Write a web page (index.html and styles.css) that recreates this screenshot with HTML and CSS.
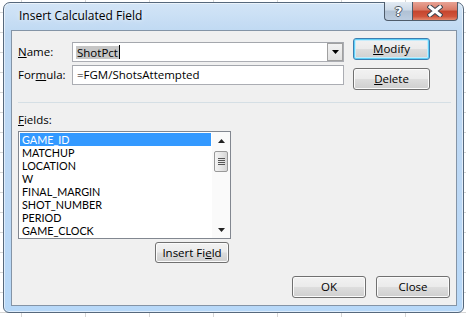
FILE: index.html
```html
<!DOCTYPE html>
<html>
<head>
<meta charset="utf-8">
<link rel="stylesheet" href="styles.css">
</head>
<body>
<div class="win">
  <div class="titlebar">
    <span class="title">Insert Calculated Field</span>
    <div class="caps">
      <span class="cap help">?</span>
      <span class="cap xbtn">
        <svg width="16" height="12" viewBox="0 0 16 12">
          <path d="M3 2 L13 10 M13 2 L3 10" stroke="#3d4650" stroke-width="5" stroke-linecap="square" fill="none"/>
          <path d="M3 2 L13 10 M13 2 L3 10" stroke="#fff" stroke-width="3" stroke-linecap="square" fill="none"/>
        </svg>
      </span>
    </div>
  </div>
  <div class="client">
    <div class="top">
      <div class="fields-col">
        <div class="row r1">
          <span class="lbl"><u>N</u>ame:</span>
          <div class="combo">
            <span class="selected">ShotPct</span><span class="caret"></span>
            <span class="drop"><svg width="7" height="4" viewBox="0 0 7 4"><path d="M0 0 H7 L3.5 4 Z" fill="#000"/></svg></span>
          </div>
        </div>
        <div class="row r2">
          <span class="lbl">For<u>m</u>ula:</span>
          <div class="input">=FGM/ShotsAttempted</div>
        </div>
      </div>
      <div class="btn-col">
        <button class="btn default modify"><u>M</u>odify</button>
        <button class="btn delete"><u>D</u>elete</button>
      </div>
    </div>
    <div class="sep"></div>
    <div class="flabel"><u>F</u>ields:</div>
    <div class="list">
      <ul class="items">
        <li class="sel">GAME_ID</li>
        <li>MATCHUP</li>
        <li>LOCATION</li>
        <li>W</li>
        <li>FINAL_MARGIN</li>
        <li>SHOT_NUMBER</li>
        <li>PERIOD</li>
        <li>GAME_CLOCK</li>
      </ul>
      <div class="sb">
        <div class="sb-arrow"><svg width="7" height="4" viewBox="0 0 7 4"><path d="M3.5 0 L7 4 H0 Z" fill="#222"/></svg></div>
        <div class="sb-thumb"><span></span><span></span><span></span><span></span></div>
        <div class="sb-track"></div>
        <div class="sb-arrow"><svg width="7" height="4" viewBox="0 0 7 4"><path d="M0 0 H7 L3.5 4 Z" fill="#222"/></svg></div>
      </div>
    </div>
    <button class="btn ins">Insert Fi<u>e</u>ld</button>
    <div class="foot">
      <button class="btn">OK</button>
      <button class="btn">Close</button>
    </div>
  </div>
</div>
</body>
</html>
```
FILE: styles.css
```css
* { box-sizing: border-box; margin: 0; padding: 0; }
html, body { width: 466px; height: 317px; overflow: hidden; }
body {
  font-family: "Open Sans", "Noto Sans", sans-serif;
  font-size: 11.5px;
  color: #000;
  background-color: #fff;
  background-image:
    linear-gradient(to right, #d6d6d6 1px, transparent 1px),
    linear-gradient(to bottom, #d6d6d6 1px, transparent 1px);
  background-size: 64px 20px;
  background-position: 21px 0, 0 12px;
  padding: 2px 0 0 3px;
}
.win {
  width: 461px;
  height: 311px;
  border: 1px solid #56687c;
  border-radius: 7px 7px 6px 6px;
  background: linear-gradient(to bottom, #d3e5f7 0%, #bed8f2 10%, #bcd8f5 60%, #b7d8f8 100%);
  box-shadow: inset 0 0 0 1px rgba(255,255,255,0.55);
  padding: 0 6px 6px 7px;
  display: flex;
  flex-direction: column;
}
.titlebar {
  height: 27px;
  display: flex;
  align-items: flex-start;
}
.title {
  padding: 5px 0 0 8px;
  font-size: 12px;
  line-height: 16px;
  text-shadow: 0 0 5px rgba(255,255,255,0.9);
}
.caps {
  margin-left: auto;
  margin-right: -1px;
  margin-top: -1px;
  display: flex;
  height: 19px;
}
.cap {
  display: flex;
  align-items: center;
  justify-content: center;
  height: 19px;
  border: 1px solid #4f5c6b;
  border-top: none;
}
.help {
  width: 28px;
  border-right: none;
  border-radius: 0 0 0 4px;
  background: linear-gradient(to bottom, #e3ebf3 0%, #ccd9e7 45%, #b0c1d4 50%, #bccde0 100%);
  color: #fff;
  font-family: "DejaVu Sans", sans-serif;
  font-weight: bold;
  font-size: 13px;
  line-height: 17px;
  text-shadow: 1px 0 0 #4a5563, -1px 0 0 #4a5563, 0 1px 0 #4a5563, 0 -1px 0 #4a5563;
}
.xbtn {
  width: 46px;
  border-radius: 0 0 4px 0;
  background: linear-gradient(to bottom, #e8a395 0%, #d97965 45%, #c5452e 50%, #d0543b 80%, #e38a6f 100%);
}
.client {
  height: 276px;
  border: 1px solid #8494a6;
  background: #f0f0f0;
  padding: 0 6px 0 6px;
  display: flex;
  flex-direction: column;
  align-items: flex-start;
}
.top { display: flex; }
.fields-col { width: 326px; }
.row { display: flex; height: 20px; line-height: 20px; }
.r1 { margin-top: 11px; }
.r2 { margin-top: 3px; }
.lbl { width: 54px; }
.combo, .input {
  width: 272px;
  height: 20px;
  border: 1px solid #abadb3;
  border-top-color: #a4a7ad;
  background: #fff;
  display: flex;
  align-items: center;
  padding-left: 3px;
  line-height: 18px;
}
.input { padding-left: 4px; }
.selected { background: #c6c6c6; line-height: 13px; padding: 0 1px 0 1px; }
.caret { width: 1px; height: 14px; background: #000; }
.drop {
  margin-left: auto;
  width: 16px;
  height: 18px;
  border: 1px solid #a0a0a0;
  background: linear-gradient(to bottom, #f2f2f2, #e2e2e2);
  display: flex;
  align-items: center;
  justify-content: center;
}
.btn-col {
  margin-left: 9px;
  width: 77px;
  display: flex;
  flex-direction: column;
}
.btn {
  font-family: inherit;
  font-size: 11.5px;
  color: #000;
  width: 74px;
  height: 22px;
  border: 1px solid #707070;
  border-radius: 3px;
  background: linear-gradient(to bottom, #f2f2f2 0%, #ebebeb 48%, #dddddd 52%, #cfcfcf 100%);
  box-shadow: inset 0 0 0 1px #fbfbfb;
  line-height: 18px;
  text-align: center;
}
.modify, .delete { width: 77px; }
.modify { margin-top: 7px; }
.delete { margin-top: 8px; }
.default {
  border-color: #3c7fb1;
  box-shadow: inset 0 0 0 1px #5fd0f8, inset 0 0 0 2px #c6ecfb;
}
.sep {
  margin-top: 12px;
  width: 433px;
  height: 1px;
  background: #d5dfe5;
}
.flabel {
  margin-top: 9px;
  line-height: 16px;
}
.list {
  margin-top: 3px;
  width: 213px;
  height: 108px;
  border: 1px solid #828790;
  background: #fff;
  display: flex;
}
.items {
  width: 193px;
  list-style: none;
  padding: 1px;
  overflow: hidden;
}
.items li {
  height: 13px;
  line-height: 13px;
  padding-left: 2px;
  font-family: "Lato", "Open Sans", sans-serif;
  font-size: 10.8px;
  white-space: nowrap;
}
.items li.sel { background: #3399ff; color: #fff; }
.sb {
  width: 18px;
  display: flex;
  flex-direction: column;
  align-items: center;
  background: #fafafa;
}
.sb-arrow {
  height: 17px;
  width: 18px;
  display: flex;
  align-items: center;
  justify-content: center;
}
.sb-thumb {
  margin-top: 2px;
  width: 14px;
  height: 21px;
  border: 1px solid #999;
  border-radius: 2px;
  background: linear-gradient(to right, #f4f4f4, #e6e6e6 50%, #d6d6d6);
  display: flex;
  flex-direction: column;
  align-items: center;
  justify-content: center;
  gap: 1px;
}
.sb-thumb span { width: 7px; height: 1px; background: #555; }
.sb-track { flex: 1; }
.ins {
  margin-top: 3px;
  margin-left: 137px;
  height: 21px;
}
.foot {
  align-self: stretch;
  margin-top: 13px;
  display: flex;
  justify-content: flex-end;
  gap: 10px;
}
```
